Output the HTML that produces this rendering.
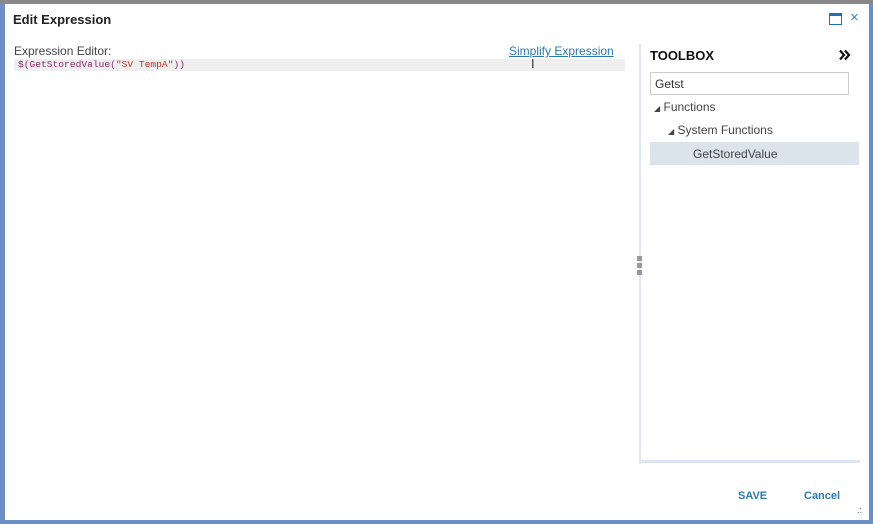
<!DOCTYPE html>
<html><head><style>
body{margin:0;width:873px;height:524px;overflow:hidden;background:#6b8fc4;font-family:"Liberation Sans",sans-serif;position:relative}
.top{position:absolute;left:0;top:0;width:873px;height:4px;background:#888}
.win{position:absolute;left:5px;top:4px;width:864px;height:516px;background:#fff}
.t{position:absolute;font-size:12px;color:#333}
</style></head><body>
<div class="top"></div>
<div class="win">
<div class="t" style="left:8px;top:8px;font-size:13px;font-weight:bold;color:#222">Edit Expression</div>
<div style="position:absolute;left:824px;top:9px;width:11px;height:8px;border:1.5px solid #1a73b5;border-top-width:3px"></div>
<div class="t" style="left:845px;top:5px;font-size:15px;color:#3a8bc6">×</div>
<div class="t" style="left:9px;top:40px;color:#444">Expression Editor:</div>
<div class="t" style="left:504px;top:40px;color:#2a7ab0;text-decoration:underline">Simplify Expression</div>
<div style="position:absolute;left:9px;top:55px;width:611px;height:12px;background:#efefef"></div>
<div class="t" style="left:13px;top:55px;font-family:'Liberation Mono',monospace;font-size:9.6px;color:#8a2a6a">$(GetStoredValue(<span style="color:#c0302a">"SV TempA"</span>))</div>
<div class="t" style="left:526px;top:52px;font-size:13px;color:#333">I</div>
<div style="position:absolute;left:634px;top:40px;width:2px;height:420px;background:#dde6f0"></div>
<div style="position:absolute;left:632px;top:252px;width:5px;height:5px;background:#999"></div>
<div style="position:absolute;left:632px;top:259px;width:5px;height:5px;background:#999"></div>
<div style="position:absolute;left:632px;top:266px;width:5px;height:5px;background:#999"></div>
<div style="position:absolute;left:636px;top:456px;width:219px;height:3px;background:#dde6f0"></div>
<div class="t" style="left:645px;top:44px;font-size:13px;font-weight:bold;color:#111">TOOLBOX</div>
<svg style="position:absolute;left:834px;top:45px" width="12" height="12" viewBox="0 0 12 12"><path d="M1 1.5L5 6L1 10.5M6 1.5L10 6L6 10.5" fill="none" stroke="#111" stroke-width="2.2"/></svg>
<div style="position:absolute;left:645px;top:68px;width:197px;height:21px;border:1px solid #ccc"></div>
<div class="t" style="left:650px;top:73px;color:#333">Getst</div>
<div class="t" style="left:649px;top:96px;color:#444"><span style="font-size:8px">◢</span> Functions</div>
<div class="t" style="left:663px;top:119px;color:#444"><span style="font-size:8px">◢</span> System Functions</div>
<div style="position:absolute;left:645px;top:138px;width:209px;height:23px;background:#dbe4ec"></div>
<div class="t" style="left:688px;top:143px;color:#444">GetStoredValue</div>
<div class="t" style="left:733px;top:486px;font-size:11px;font-weight:bold;color:#2a7ab0">SAVE</div>
<div class="t" style="left:799px;top:486px;font-size:11px;font-weight:bold;color:#2a7ab0">Cancel</div>
<div class="t" style="left:852px;top:501px;font-size:9px;color:#555">.:</div>
</div>
</body></html>
